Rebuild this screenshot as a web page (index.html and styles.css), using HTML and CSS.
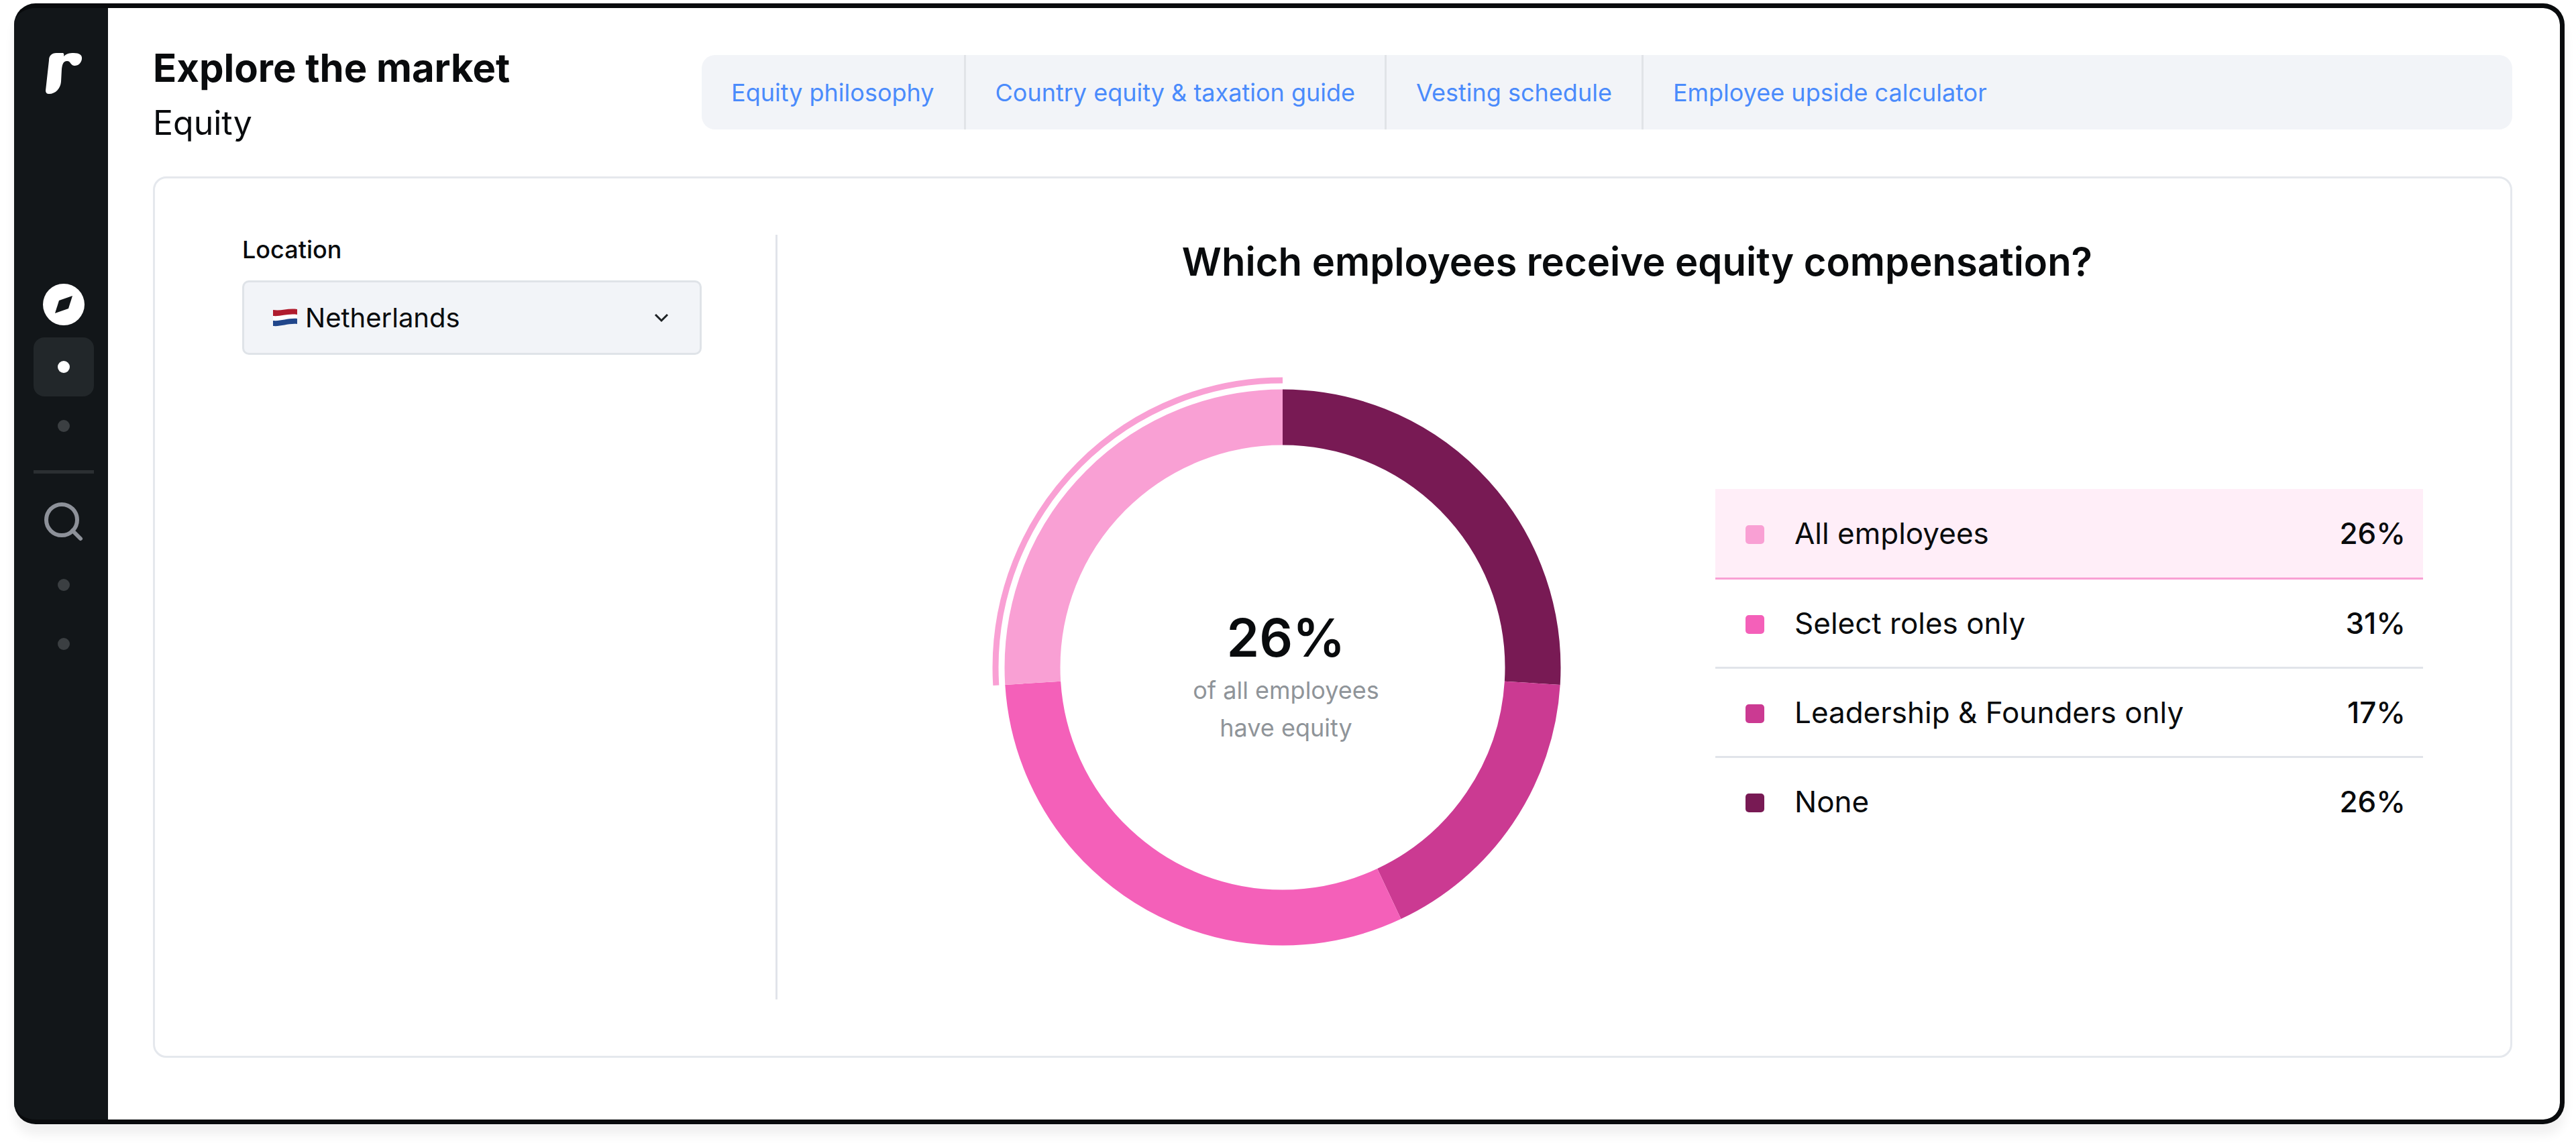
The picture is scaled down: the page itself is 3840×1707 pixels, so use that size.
FILE: index.html
```html
<!DOCTYPE html>
<html lang="en">
<head>
    <meta charset="UTF-8">
    <meta name="viewport" content="width=device-width, initial-scale=1.0">
    <title>Explore the market - Equity</title>
    <link rel="stylesheet" href="styles.css">
</head>
<body>
    <div class="app">
        <nav class="sidebar" aria-label="Main">
            <a class="logo" href="#" aria-label="Home">
                <svg viewBox="0 0 56 64">
                    <path d="M6 12C6 5 10 1 17 1H27Q29 2 28 6C32 2 36 1 43 1C51 1 56 4 55 10C54 16 50 20 44 20C37 19 39 13 33 13C27 13 26 18 25 25L24 44C23 54 16 62 6 62Q1 62 1 57Z"/>
                </svg>
            </a>
            <a class="nav-icon" href="#" aria-label="Explore">
                <svg viewBox="0 0 64 64">
                    <circle cx="32" cy="32" r="31" fill="#fff"/>
                    <path d="M19 45L25 26L45 19L39 38Z" fill="#121619"/>
                </svg>
            </a>
            <a class="nav-dot active" href="#" aria-label="Equity"></a>
            <a class="nav-dot" href="#" aria-label="Salary"></a>
            <hr>
            <a class="nav-icon" href="#" aria-label="Search">
                <svg viewBox="0 0 64 64" fill="none" stroke="#8d9199" stroke-width="6">
                    <circle cx="29" cy="28" r="23"/>
                    <path d="M45 44L57 56" stroke-linecap="round"/>
                </svg>
            </a>
            <a class="nav-dot" href="#" aria-label="Roles"></a>
            <a class="nav-dot" href="#" aria-label="Levels"></a>
        </nav>

        <main class="content">
            <header class="page-header">
                <div class="page-title">
                    <h1>Explore the market</h1>
                    <p>Equity</p>
                </div>
                <nav class="link-bar" aria-label="Resources">
                    <a href="#">Equity philosophy</a>
                    <a href="#">Country equity &amp; taxation guide</a>
                    <a href="#">Vesting schedule</a>
                    <a href="#">Employee upside calculator</a>
                </nav>
            </header>

            <section class="card">
                <div class="filters">
                    <label for="location">Location</label>
                    <div class="select-box">
                        <svg class="flag" viewBox="0 0 36 27">
                            <path d="M0 2C12 4 22 -1 36 1V23C22 22 12 27 0 26Z" fill="#fff"/>
                            <path d="M0 2C12 4 22 -1 36 1V9C22 7 12 12 0 11Z" fill="#b01c2e"/>
                            <path d="M0 18C12 19 22 14 36 15V23C22 22 12 27 0 26Z" fill="#21468b"/>
                        </svg>
                        <select id="location">
                            <option>Netherlands</option>
                        </select>
                        <svg class="chevron" viewBox="0 0 22 14">
                            <path d="M2 2L11 11L20 2"/>
                        </svg>
                    </div>
                </div>

                <div class="results">
                    <h2>Which employees receive equity compensation?</h2>
                    <div class="chart-row">
                        <div class="donut">
                            <!-- pathLength 100, so dashes are percentages -->
                            <svg viewBox="-435 -435 870 870">
                                <g fill="none" stroke-width="83" transform="rotate(-90)">
                                    <circle r="373" pathLength="100" stroke="#781a54" stroke-dasharray="26 74"/>
                                    <circle r="373" pathLength="100" stroke="#cb3a92" stroke-dasharray="17 83" stroke-dashoffset="-26"/>
                                    <circle r="373" pathLength="100" stroke="#f460b9" stroke-dasharray="31 69" stroke-dashoffset="-43"/>
                                    <circle r="373" pathLength="100" stroke="#f9a0d4" stroke-dasharray="26 74" stroke-dashoffset="-74"/>
                                    <circle r="428" pathLength="100" stroke="#f9a0d4" stroke-width="9" stroke-dasharray="26 74" stroke-dashoffset="-74"/>
                                </g>
                            </svg>
                            <div class="donut-label">
                                <strong>26%</strong>
                                <span>of all employees<br>have equity</span>
                            </div>
                        </div>

                        <table class="legend">
                            <tr class="selected">
                                <th scope="row"><i class="swatch all"></i>All employees</th>
                                <td>26%</td>
                            </tr>
                            <tr>
                                <th scope="row"><i class="swatch roles"></i>Select roles only</th>
                                <td>31%</td>
                            </tr>
                            <tr>
                                <th scope="row"><i class="swatch leaders"></i>Leadership &amp; Founders only</th>
                                <td>17%</td>
                            </tr>
                            <tr>
                                <th scope="row"><i class="swatch none"></i>None</th>
                                <td>26%</td>
                            </tr>
                        </table>
                    </div>
                </div>
            </section>
        </main>
    </div>
</body>
</html>
```
FILE: styles.css
```css
* {
    box-sizing: border-box;
}

body {
    margin: 0;
    padding: 5px 17px 31px 21px;
    min-height: 100vh;
    display: flex;
    font-family: Inter, "Liberation Sans", sans-serif;
    font-size: 36px;
    color: #090b0d;
    background-color: #fff;
}

h1, h2, p {
    margin: 0;
}

a {
    text-decoration: none;
}

svg {
    display: block;
}

.app {
    flex: 1;
    display: flex;
    border: 7px solid #090b0d;
    border-left: 0;
    border-radius: 32px;
    overflow: hidden;
    background-color: #121619;
    box-shadow: 0 16px 16px rgba(0, 0, 0, 0.06);
}

/* Sidebar */
.sidebar {
    flex: 0 0 140px;
    display: flex;
    flex-direction: column;
    align-items: center;
    padding: 66px 0 0 8px;
    background-color: #121619;
}

.logo {
    width: 56px;
    margin-bottom: 280px;
}

.logo svg {
    fill: #fff;
}

.nav-icon {
    width: 64px;
    height: 64px;
    margin-bottom: 17px;
}

.nav-dot {
    width: 90px;
    height: 88px;
    border-radius: 16px;
    display: flex;
    align-items: center;
    justify-content: center;
}

.nav-dot::before {
    content: "";
    width: 18px;
    height: 18px;
    border-radius: 50%;
    background-color: #3b3f42;
}

.nav-dot.active {
    background-color: #22272a;
}

.nav-dot.active::before {
    background-color: #fff;
}

.sidebar hr {
    width: 90px;
    height: 5px;
    margin: 22px 0 41px;
    border: 0;
    background-color: #2b2f32;
}

/* Header */
.content {
    flex: 1;
    display: flex;
    flex-direction: column;
    padding: 53px 71px 92px 67px;
    background-color: #fff;
    border-radius: 0 24px 24px 0;
}

.page-header {
    display: flex;
    align-items: flex-start;
    margin-bottom: 40px;
}

.page-title {
    flex: 0 0 818px;
}

.page-title h1 {
    font-size: 58px;
    line-height: 72px;
    font-weight: 700;
}

.page-title p {
    margin-top: 6px;
    font-size: 50px;
    line-height: 80px;
}

.link-bar {
    flex: 1;
    display: flex;
    height: 111px;
    margin-top: 17px;
    border-radius: 20px;
    background-color: #f2f4f8;
}

.link-bar a {
    display: flex;
    align-items: center;
    padding: 0 44px;
    border-right: 3px solid #e1e4e8;
    color: #4a8bfc;
}

.link-bar a:last-child {
    border-right: 0;
}

/* Card */
.card {
    flex: 1;
    display: flex;
    padding: 84px 130px;
    border: 3px solid #e5e8ed;
    border-radius: 20px;
}

.filters {
    flex: 0 0 798px;
    padding-right: 110px;
    border-right: 3px solid #e1e4ea;
}

.filters label {
    display: block;
    margin-bottom: 24px;
    line-height: 44px;
    font-weight: 500;
}

.select-box {
    display: flex;
    align-items: center;
    height: 111px;
    padding: 0 46px 0 43px;
    border: 3px solid #dfe3e8;
    border-radius: 10px;
    background-color: #f2f4f8;
}

.select-box select {
    flex: 1;
    appearance: none;
    border: 0;
    padding: 0 12px;
    font: inherit;
    font-size: 40px;
    color: inherit;
    background: transparent;
}

.flag {
    width: 36px;
}

.chevron {
    width: 22px;
    fill: none;
    stroke: #1d2124;
    stroke-width: 3;
}

.results {
    flex: 1;
}

.results h2 {
    padding-left: 110px;
    font-size: 58px;
    line-height: 80px;
    font-weight: 600;
    text-align: center;
}

.chart-row {
    display: flex;
    align-items: center;
    padding-left: 318px;
    margin-top: 130px;
}

.donut {
    flex: 0 0 870px;
    position: relative;
}

.donut-label {
    position: absolute;
    inset: 0;
    display: flex;
    flex-direction: column;
    align-items: center;
    justify-content: center;
    padding: 24px 0 0 10px;
    text-align: center;
}

.donut-label strong {
    font-size: 78px;
    line-height: 100px;
    font-weight: 600;
}

.donut-label span {
    line-height: 56px;
    color: #8f9499;
}

/* Legend */
.legend {
    flex: 1;
    margin-left: 210px;
    border-collapse: collapse;
    font-size: 44px;
}

.legend tr {
    height: 133px;
    border-bottom: 3px solid #e1e4ea;
}

.legend tr:last-child {
    border-bottom: 0;
}

.legend .selected {
    background-color: #ffeef8;
    border-bottom-color: #f9a0d4;
}

.legend th {
    padding: 0 0 0 45px;
    font-weight: 400;
    text-align: left;
}

.legend td {
    padding: 0 26px 0 0;
    font-weight: 500;
    text-align: right;
}

.swatch {
    display: inline-block;
    width: 28px;
    height: 28px;
    margin-right: 45px;
    border-radius: 5px;
}

.swatch.all {
    background-color: #f9a0d4;
}

.swatch.roles {
    background-color: #f460b9;
}

.swatch.leaders {
    background-color: #cb3a92;
}

.swatch.none {
    background-color: #781a54;
}
```
